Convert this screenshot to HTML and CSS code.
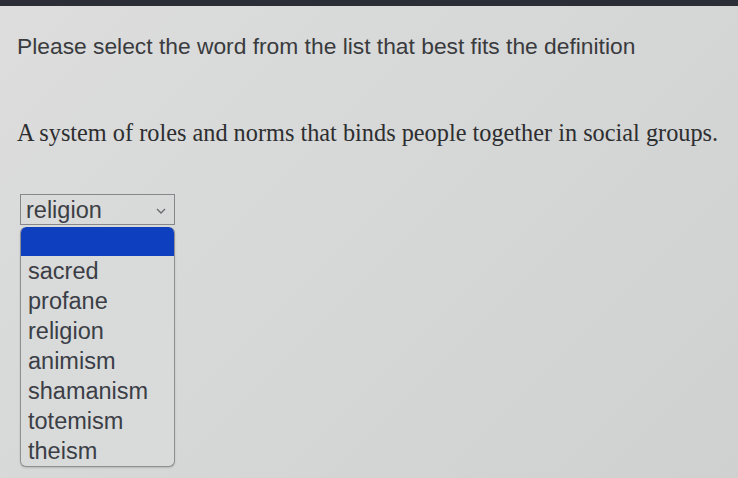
FILE: index.html
```html
<!DOCTYPE html>
<html>
<head>
<meta charset="utf-8">
<link rel="stylesheet" href="styles.css">
</head>
<body>
<div class="topbar"></div>
<main class="page">
  <p class="prompt">Please select the word from the list that best fits the definition</p>
  <p class="definition">A system of roles and norms that binds people together in social groups.</p>
  <div class="picker">
    <div class="select">
      <span class="value">religion</span>
      <svg class="chev" width="10" height="6" viewBox="0 0 10 6"><path d="M1 1 L5 5 L9 1" fill="none" stroke="#6a6d72" stroke-width="1.4"/></svg>
    </div>
    <ul class="list">
      <li class="opt blank"></li>
      <li class="opt">sacred</li>
      <li class="opt">profane</li>
      <li class="opt">religion</li>
      <li class="opt">animism</li>
      <li class="opt">shamanism</li>
      <li class="opt">totemism</li>
      <li class="opt">theism</li>
    </ul>
  </div>
</main>
</body>
</html>
```
FILE: styles.css
```css
html, body {
  margin: 0;
  padding: 0;
}
body {
  width: 738px;
  height: 478px;
  overflow: hidden;
  background: linear-gradient(135deg, #dcdddc 0%, #d6d7d7 50%, #cfd1d1 100%);
}
.topbar {
  height: 6px;
  background: #2b2e36;
}
.page {
  padding: 0 0 0 17px;
}
.prompt {
  margin: 0;
  padding-top: 26px;
  font-family: "Liberation Sans", Arial, sans-serif;
  font-size: 22.8px;
  line-height: 28px;
  color: #3a3b3e;
}
.definition {
  margin: 0;
  padding-top: 59px;
  font-family: "Liberation Serif", "Times New Roman", serif;
  font-size: 24.3px;
  line-height: 28px;
  color: #2d2e30;
}
.picker {
  margin-top: 47px;
  margin-left: 3px;
  width: 155px;
}
.select {
  box-sizing: border-box;
  height: 31px;
  border: 1px solid #85878b;
  display: flex;
  align-items: center;
  justify-content: space-between;
  padding: 0 8px 0 5px;
  font-family: "Liberation Sans", Arial, sans-serif;
  font-size: 23.5px;
  color: #3c3e44;
}
.value {
  line-height: 28px;
}
.chev {
  margin-top: 2px;
}
.list {
  list-style: none;
  margin: 2px 0 0 0;
  padding: 0;
  box-sizing: border-box;
  width: 155px;
  border: 1px solid #8d8f93;
  border-top: none;
  border-radius: 6px;
  background: #d9dada;
  overflow: hidden;
  box-shadow: 0 1px 2px rgba(0,0,0,0.15);
}
.opt {
  height: 30px;
  line-height: 30px;
  padding-left: 7px;
  font-family: "Liberation Sans", Arial, sans-serif;
  font-size: 23.5px;
  color: #3b3e46;
}
.opt.blank {
  height: 29px;
  background: #0d3fbe;
  border-radius: 6px 6px 0 0;
  margin: 0 -1px;
}
```
